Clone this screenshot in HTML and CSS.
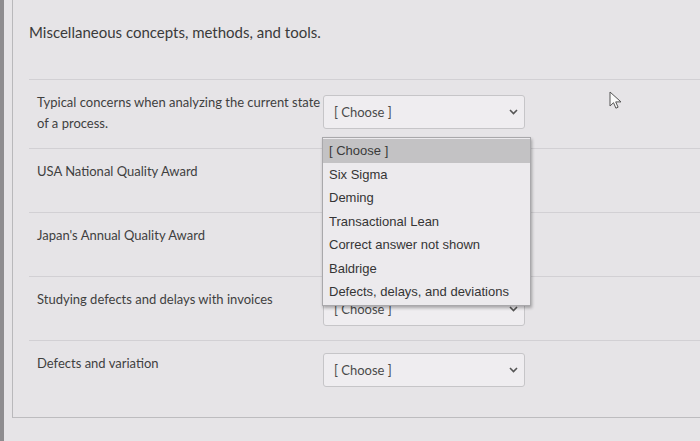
FILE: index.html
```html
<!DOCTYPE html>
<html>
<head>
<meta charset="utf-8">
<link rel="stylesheet" href="styles.css">
</head>
<body>
<div class="screen">
  <div class="question">
    <div class="header">
      <h2 class="title">Miscellaneous concepts, methods, and tools.</h2>
    </div>
    <div class="rows">
      <div class="row">
        <div class="label">Typical concerns when analyzing the current state of a process.</div>
        <div class="field">
          <div class="select"><span>[ Choose ]</span><svg class="chev" width="9" height="6" viewBox="0 0 9 6"><path d="M1 1l3.5 3.5L8 1" fill="none" stroke="#555" stroke-width="1.6"/></svg></div>
          <ul class="menu">
            <li class="active">[ Choose ]</li>
            <li>Six Sigma</li>
            <li>Deming</li>
            <li>Transactional Lean</li>
            <li>Correct answer not shown</li>
            <li>Baldrige</li>
            <li>Defects, delays, and deviations</li>
          </ul>
        </div>
      </div>
      <div class="row">
        <div class="label">USA National Quality Award</div>
        <div class="field"><div class="select"><span>[ Choose ]</span><svg class="chev" width="9" height="6" viewBox="0 0 9 6"><path d="M1 1l3.5 3.5L8 1" fill="none" stroke="#555" stroke-width="1.6"/></svg></div></div>
      </div>
      <div class="row">
        <div class="label">Japan's Annual Quality Award</div>
        <div class="field"><div class="select"><span>[ Choose ]</span><svg class="chev" width="9" height="6" viewBox="0 0 9 6"><path d="M1 1l3.5 3.5L8 1" fill="none" stroke="#555" stroke-width="1.6"/></svg></div></div>
      </div>
      <div class="row">
        <div class="label">Studying defects and delays with invoices</div>
        <div class="field"><div class="select"><span>[ Choose ]</span><svg class="chev" width="9" height="6" viewBox="0 0 9 6"><path d="M1 1l3.5 3.5L8 1" fill="none" stroke="#555" stroke-width="1.6"/></svg></div></div>
      </div>
      <div class="row last">
        <div class="label">Defects and variation</div>
        <div class="field"><div class="select"><span>[ Choose ]</span><svg class="chev" width="9" height="6" viewBox="0 0 9 6"><path d="M1 1l3.5 3.5L8 1" fill="none" stroke="#555" stroke-width="1.6"/></svg></div></div>
      </div>
    </div>
  </div>
  <svg class="cursor" width="14" height="19" viewBox="0 0 14 19"><path d="M1 1v14l3.5-3.3 2.4 5.5 2.2-1-2.4-5.3H12z" fill="#fafafa" stroke="#555" stroke-width="1"/></svg>
</div>
</body>
</html>
```

FILE: styles.css
```css
html, body {
  margin: 0;
  padding: 0;
  height: 100%;
  overflow: hidden;
}
body {
  background: #e6e4e7;
  font-family: "Lato", "Liberation Sans", sans-serif;
  color: #3f3f3f;
}
.screen {
  position: relative;
  height: 441px;
  border-left: 4px solid #8e8c8f;
  box-sizing: border-box;
}
.question {
  margin-left: 8px;
  height: 418px;
  border-left: 1px solid #b9b8bb;
  border-bottom: 1px solid #bdbcbf;
  box-sizing: border-box;
  padding-left: 16px;
}
.header {
  height: 80px;
  border-bottom: 1px solid #d2d0d4;
  box-sizing: border-box;
  padding-top: 22px;
}
.title {
  margin: 0;
  font-size: 15px;
  font-weight: 400;
  line-height: 20px;
  color: #3a3a3a;
}
.row {
  display: grid;
  grid-template-columns: 286px 202px;
  align-items: start;
  padding: 15px 0 14px 8px;
  border-bottom: 1px solid #d2d0d4;
}
.row.last {
  border-bottom: none;
  padding-top: 12px;
}
.label {
  font-size: 13px;
  line-height: 21px;
  margin-top: -3px;
  color: #3f3f3f;
}
.row.last .label {
  margin-top: 0;
}
.field {
  position: relative;
}
.select {
  height: 34px;
  box-sizing: border-box;
  border: 1px solid #c6c5c8;
  border-radius: 3px;
  background: #efedf0;
  display: flex;
  align-items: center;
  justify-content: space-between;
  padding: 0 6px 0 10px;
  font-size: 13px;
  color: #4a4a4a;
}
.chev {
  display: block;
}
.menu {
  position: absolute;
  left: -1px;
  top: 42px;
  width: 209px;
  margin: 0;
  padding: 1px 0 3px;
  list-style: none;
  background: #eceaed;
  border: 1px solid #a9a8ab;
  box-shadow: 1px 2px 3px rgba(0, 0, 0, 0.3);
  font-family: "Liberation Sans", Arial, sans-serif;
  font-size: 13px;
  color: #353535;
  z-index: 5;
  box-sizing: border-box;
  height: 169px;
}
.menu li {
  height: 23.5px;
  line-height: 23.5px;
  padding-left: 6px;
}
.menu li.active {
  background: #c3c2c4;
  color: #3a3a3a;
}
.cursor {
  position: absolute;
  left: 605px;
  top: 91px;
}
```
